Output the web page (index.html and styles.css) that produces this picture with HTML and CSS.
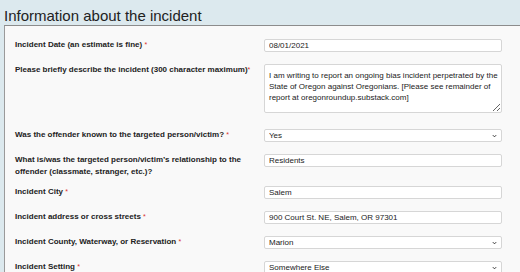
FILE: index.html
```html
<!DOCTYPE html>
<html lang="en">
<head>
<meta charset="utf-8">
<title>Information about the incident</title>
<link rel="stylesheet" href="styles.css">
</head>
<body>
<header class="page-head">
  <h1 class="page-title">Information about the incident</h1>
</header>
<section class="panel">
  <form class="form-grid">
    <div class="row">
      <label class="label">Incident Date (an estimate is fine) <span class="req">*</span></label>
      <input class="field" type="text" value="08/01/2021">
    </div>
    <div class="row row-tall">
      <label class="label">Please briefly describe the incident (300 character maximum)<span class="req">*</span></label>
      <textarea class="field area">I am writing to report an ongoing bias incident perpetrated by the State of Oregon against Oregonians. [Please see remainder of report at oregonroundup.substack.com]</textarea>
    </div>
    <div class="row">
      <label class="label">Was the offender known to the targeted person/victim? <span class="req">*</span></label>
      <select class="field select"><option>Yes</option></select>
    </div>
    <div class="row">
      <label class="label">What is/was the targeted person/victim’s relationship to the offender (classmate, stranger, etc.)?</label>
      <input class="field" type="text" value="Residents">
    </div>
    <div class="row">
      <label class="label">Incident City <span class="req">*</span></label>
      <input class="field" type="text" value="Salem">
    </div>
    <div class="row">
      <label class="label">Incident address or cross streets <span class="req">*</span></label>
      <input class="field" type="text" value="900 Court St. NE, Salem, OR 97301">
    </div>
    <div class="row">
      <label class="label">Incident County, Waterway, or Reservation <span class="req">*</span></label>
      <select class="field select"><option>Marion</option></select>
    </div>
    <div class="row">
      <label class="label">Incident Setting <span class="req">*</span></label>
      <select class="field select"><option>Somewhere Else</option></select>
    </div>
  </form>
</section>
</body>
</html>
```

FILE: styles.css
```css
* { box-sizing: border-box; }

html, body {
  margin: 0;
  padding: 0;
  background: #dce9ee;
  font-family: "Liberation Sans", Arial, sans-serif;
  color: #222;
  overflow: hidden;
}

.page-head {
  padding: 8px 0 2px 4px;
}

.page-title {
  margin: 0;
  font-size: 15px;
  line-height: 15px;
  font-weight: normal;
  color: #222;
}

.panel {
  margin-left: 4px;
  background: #f9f9f9;
  border-top: 1px solid #8c8c8c;
  border-left: 1px solid #9a9a9a;
  padding: 13px 0 0 10px;
  min-height: calc(100vh - 25px);
}

.form-grid {
  margin: 0;
}

.row {
  display: grid;
  grid-template-columns: 240px 238px;
  column-gap: 9px;
  align-items: start;
  min-height: 25px;
  padding-bottom: 9px;
}

.row-tall {
  padding-bottom: 16px;
}

.label {
  font-size: 8px;
  line-height: 11.5px;
  font-weight: bold;
  color: #222;
}

.req {
  color: #d9322e;
  font-weight: normal;
  font-size: 7px;
  vertical-align: top;
}

.field {
  display: block;
  width: 238px;
  height: 13px;
  margin: 0;
  padding: 0 4px;
  border: 1px solid #d6d6d6;
  border-radius: 2px;
  background: #fff;
  font-family: "Liberation Sans", Arial, sans-serif;
  font-size: 8px;
  line-height: 11px;
  color: #222;
  outline: none;
}

.area {
  height: 49px;
  padding: 5px 2px 3px 4px;
  line-height: 11px;
  overflow: hidden;
}

.select {
  appearance: none;
  -webkit-appearance: none;
  padding: 0 4px;
  background-color: #fff;
  background-image: url("data:image/svg+xml,%3Csvg xmlns='http://www.w3.org/2000/svg' width='6' height='4' viewBox='0 0 6 4'%3E%3Cpath d='M1 1l2 2 2-2' fill='none' stroke='%23333' stroke-width='1.2'/%3E%3C/svg%3E");
  background-repeat: no-repeat;
  background-position: right 4px center;
  background-size: 5px 4px;
}
```
